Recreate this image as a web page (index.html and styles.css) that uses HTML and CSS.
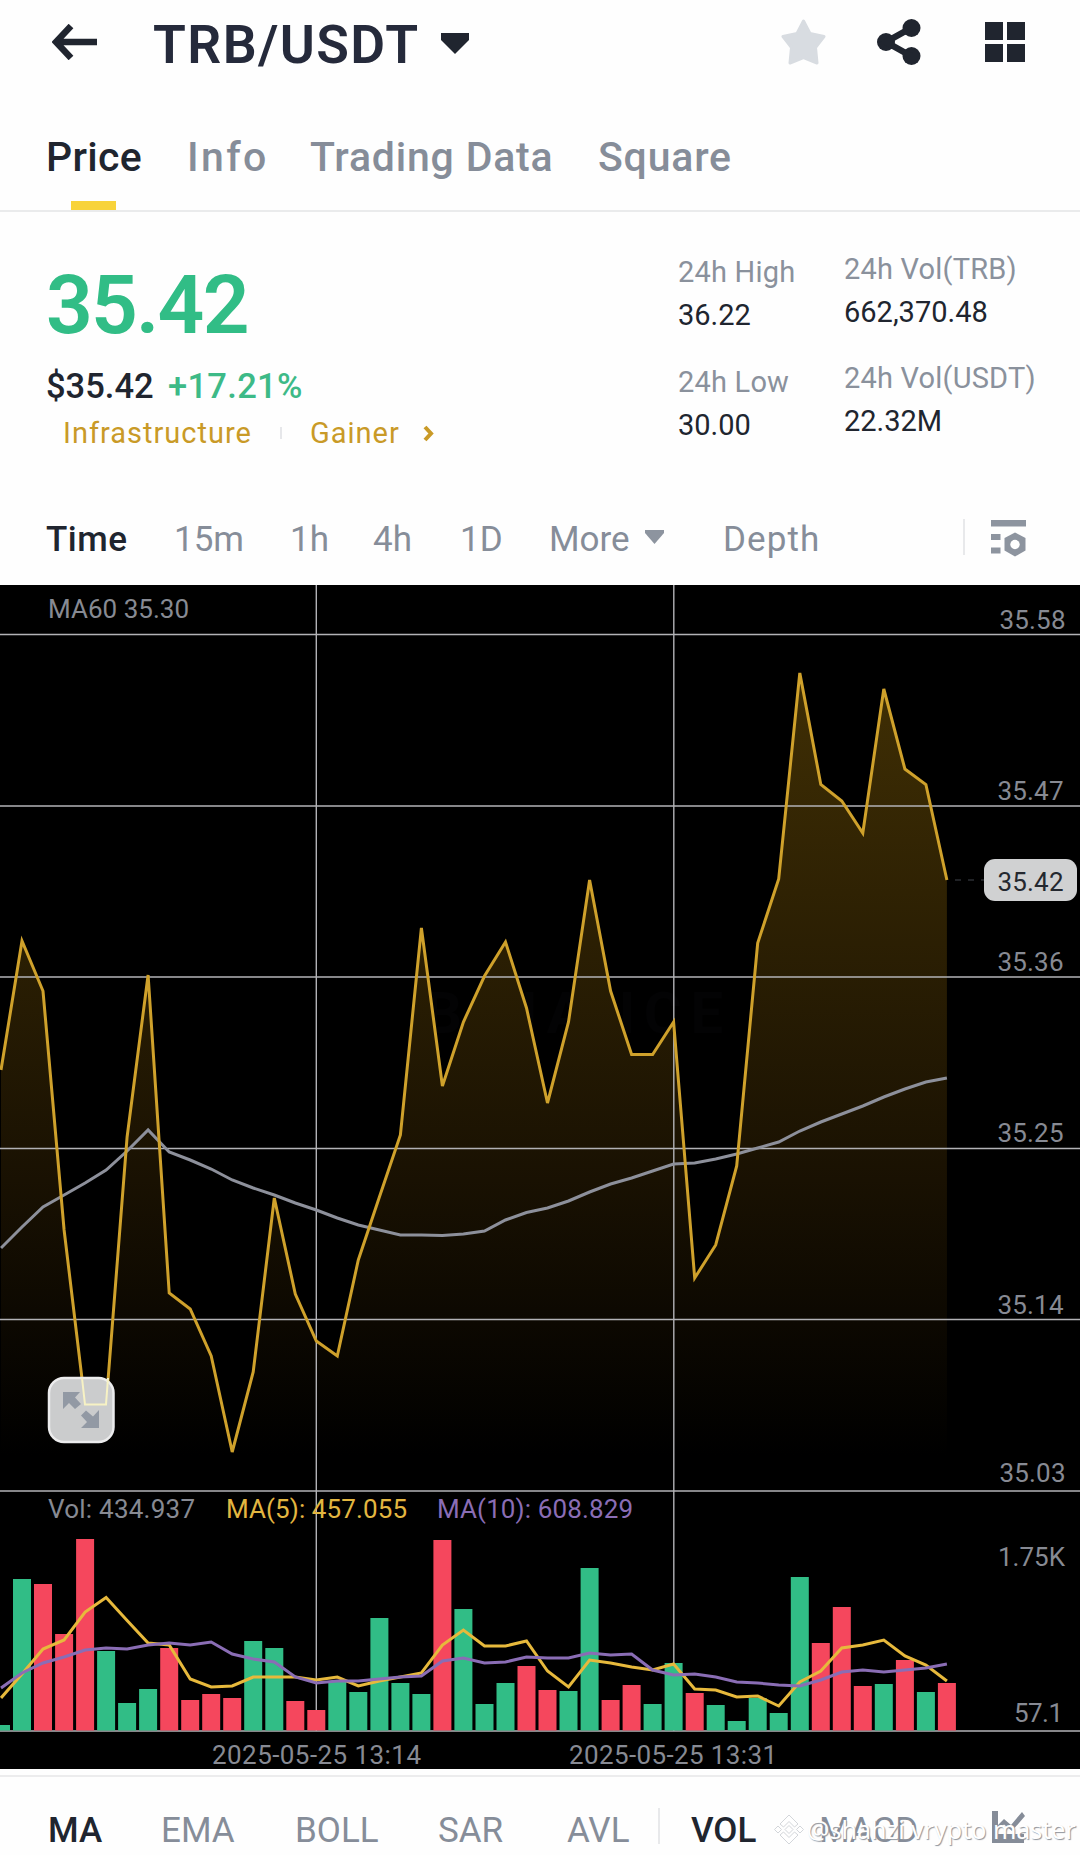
FILE: index.html
```
<!DOCTYPE html>
<html lang="en">
<head>
    <meta charset="UTF-8">
    <title>TRB/USDT</title>
    <link rel="stylesheet" href="styles.css">
</head>
<body>
    <div id="header">
        <svg class="back" width="46" height="36" viewBox="0 0 46 36"><path d="M19 2 L4 18 L19 34 M4 18 H45" fill="none" stroke="#20252f" stroke-width="6.5"/></svg>
        <div class="pair">
            <h1>TRB/USDT</h1>
            <svg width="28" height="21" viewBox="0 0 28 21"><path d="M0 0 H28 V7 L14 21 L0 7 Z" fill="#20252f"/></svg>
        </div>
        <div class="tools">
            <svg class="star" width="45" height="46" viewBox="0 0 45 46"><path d="M22.5 2 L29 14.5 L43 17.5 L34.5 28.5 L36 44 L22.5 38.5 L9 44 L10.5 28.5 L2 17.5 L16 14.5 Z" fill="#d8dce1" stroke="#d8dce1" stroke-width="3" stroke-linejoin="round"/></svg>
            <svg class="share" width="44" height="46" viewBox="0 0 44 46"><g fill="#20252f"><circle cx="9" cy="23" r="9"/><circle cx="34.500" cy="9" r="9"/><circle cx="34.500" cy="37" r="9"/></g><path d="M34 9 L9 23 L34 37" fill="none" stroke="#20252f" stroke-width="6.500"/></svg>
            <svg class="apps" width="40" height="40" viewBox="0 0 40 40"><path d="M0 0h18v18H0z M22 0h18v18H22z M0 22h18v18H0z M22 22h18v18H22z" fill="#20252f"/></svg>
        </div>
    </div>

    <ul id="tab">
        <li class="selected">Price</li>
        <li class="info">Info</li>
        <li>Trading Data</li>
        <li>Square</li>
    </ul>

    <div id="ticker">
        <div class="last">
            <div class="price">35.42</div>
            <div class="change"><span class="usd">$35.42</span><span class="up">+17.21%</span></div>
            <div class="tags">
                <span class="infra">Infrastructure</span><i></i><span class="gainer">Gainer</span>
                <svg width="11" height="17" viewBox="0 0 11 17"><path d="M2 2 L8 8.500 L2 15" fill="none" stroke="#c99a27" stroke-width="4"/></svg>
            </div>
        </div>
        <dl class="range">
            <dt>24h High</dt>
            <dd>36.22</dd>
            <dt>24h Low</dt>
            <dd>30.00</dd>
        </dl>
        <dl class="volume">
            <dt>24h Vol(TRB)</dt>
            <dd>662,370.48</dd>
            <dt>24h Vol(USDT)</dt>
            <dd>22.32M</dd>
        </dl>
    </div>

    <ul id="period">
        <li class="selected">Time</li>
        <li>15m</li>
        <li>1h</li>
        <li>4h</li>
        <li>1D</li>
        <li>More<svg width="19" height="14" viewBox="0 0 19 14"><path d="M0 0 H19 V3 L9.500 14 L0 3 Z" fill="#8d949f"/></svg></li>
        <li class="depth">Depth</li>
        <li class="setting">
            <svg width="36" height="37" viewBox="0 0 36 37"><path d="M0 0h35v6.500H0z M0 14h9.500v6H0z M0 27.500h9.500v6H0z" fill="#8d949f"/><path d="M24 12.500 L34.500 18 V30.500 L24 36.500 L13.500 30.500 V18 Z" fill="#8d949f"/><circle cx="24" cy="24.500" r="4.700" fill="#fff"/></svg>
        </li>
    </ul>

    <svg id="chart" width="1080" height="1184" viewBox="0 585 1080 1184">
        <defs>
            <linearGradient id="fade" gradientUnits="userSpaceOnUse" x1="0" y1="670" x2="0" y2="1455">
                <stop offset="0" stop-color="#402f04"/>
                <stop offset=".65" stop-color="#191102"/>
                <stop offset="1" stop-color="#000"/>
            </linearGradient>
        </defs>
        <text class="brand" x="425" y="1033" textLength="298">BINANCE</text>
        <path id="area" fill="url(#fade)"/>
        <path class="grid" d="M0 634.500H1080 M0 806H1080 M0 977H1080 M0 1148.500H1080 M0 1319.500H1080 M0 1491H1080 M0 1731H1080"/>
        <path class="grid col" d="M316.300 585V1731 M673.800 585V1731"/>
        <path d="M955 880H984" stroke="#2b2e33" stroke-width="1.500" stroke-dasharray="6 7"/>
        <g id="bars"></g>
        <polyline id="ma60" class="line" stroke="#8d909b"/>
        <polyline id="time" class="line" stroke="#cfa12b"/>
        <polyline id="ma5" class="line" stroke="#e7b93c"/>
        <polyline id="ma10" class="line" stroke="#8a6db5"/>

        <text x="48" y="618" textLength="141">MA60 35.30</text>
        <text x="999.500" y="629" textLength="66">35.58</text>
        <text x="997.500" y="800" textLength="66">35.47</text>
        <text x="997.500" y="971" textLength="66">35.36</text>
        <text x="997.500" y="1142" textLength="66">35.25</text>
        <text x="997.500" y="1314" textLength="66">35.14</text>
        <text x="999.500" y="1482" textLength="66">35.03</text>
        <text x="998" y="1566" textLength="67">1.75K</text>
        <text x="1014" y="1722" textLength="49">57.1</text>
        <text x="48" y="1518" textLength="147">Vol: 434.937</text>
        <text x="226" y="1518" textLength="181" class="yellow">MA(5): 457.055</text>
        <text x="437" y="1518" textLength="196" class="purple">MA(10): 608.829</text>
        <text x="212" y="1764" textLength="209">2025-05-25 13:14</text>
        <text x="569" y="1764" textLength="208">2025-05-25 13:31</text>

        <rect x="984" y="859" width="93" height="42" rx="11" fill="#d0d1d2"/>
        <text x="997.500" y="891" textLength="66" class="now">35.42</text>

        <rect x="49" y="1378" width="64.500" height="64" rx="15" fill="#cbcccd" stroke="#ececed" stroke-width="2.500"/>
        <path d="M82 1378 L85 1404.500 H106 L108 1378" fill="none" stroke="#f7f2c4" stroke-width="2"/>
        <path d="M63 1392 H80 L75 1397.500 L81 1404 L75 1409 L69 1403 L63 1409 Z" fill="#9299a4"/>
        <path d="M99 1428 H81 L87 1422 L81 1415.500 L86 1410.500 L93 1416.500 L99 1410 Z" fill="#9299a4"/>
    </svg>

    <ul id="indicator">
        <li class="selected">MA</li>
        <li>EMA</li>
        <li>BOLL</li>
        <li>SAR</li>
        <li>AVL</li>
        <li class="selected vol">VOL</li>
        <li>MACD</li>
        <li><svg width="33" height="33" viewBox="0 0 33 33"><path d="M0 0 H6 V14 L12 8 L19 14 L30 1 L33 5 L20 20 L12 13.500 L6 19 V23 H32 V32 H0 Z" fill="#858c98"/></svg></li>
    </ul>
    <div id="watermark">
        <svg width="30" height="31" viewBox="0 0 30 31"><g fill="#fff" stroke="#d3d6da" stroke-width="1"><path d="M15 1 L24 10 L20.500 13 L15 7.500 L9.500 13 L6 10 Z"/><path d="M15 30 L24 21 L20.500 18 L15 23.500 L9.500 18 L6 21 Z"/><path d="M15 11.500 L19 15.500 L15 19.500 L11 15.500 Z"/><path d="M4 12 L7.500 15.500 L4 19 L.5 15.500 Z M26 12 L29.500 15.500 L26 19 L22.500 15.500 Z"/></g></svg>
        <span>@shahzi vrypto master</span>
    </div>
<script>
    var step = 21.02;
    var aTime = [1070,941,991,1230,1404.500,1404.500,1137,975,1293,1309,1356,1452,1372,1198,1294,1341,1356,1260,1197,1135,928,1086,1022,976,942,1008,1103,1022,880,991,1054.500,1054.500,1022,1278,1245,1166,943,879,673,784.500,801,833,689,769,784.500,880];
    var aMa60 = [1248,1227,1207,1195,1183,1170,1151,1130,1152,1160,1169,1180,1188,1195,1203,1210,1218,1225,1230,1235,1235,1235.500,1234,1231,1220,1212.500,1208,1201,1192,1184,1178,1171,1164,1163,1159,1154,1148,1142,1131,1122,1114,1106,1097,1089,1082,1078];
    var aVol = [1725,1579,1584,1634,1539,1651,1703,1689,1648,1700,1694,1698,1641,1648,1701,1710,1682,1692,1618,1683,1694,1540,1609,1704,1683,1666,1690,1691,1568,1700,1685,1704,1663,1693,1705,1721,1698,1713,1577,1643,1607,1686,1684,1660,1692,1683];
    var color = "ggrrrgggrrrrggrrgggggrgggrrggrrggrgggggrrrgrgr";
    var aMa5 = [1698,1674,1649,1640,1612,1597.500,1620.500,1643,1645,1679,1687,1686,1677,1677,1677,1680,1677,1686,1681,1677,1673,1645,1630,1646,1646,1641,1671,1687,1660,1663,1667,1670,1664,1689,1690,1697,1696,1706,1682,1671,1648,1645,1640,1656,1665,1681];
    var aMa10 = [1688,1673,1663,1657,1650,1648,1649,1645,1643,1645,1642,1654,1659,1662,1677,1683,1681,1681,1679,1677,1676,1661,1658,1663,1662,1657,1658,1658,1653,1655,1654,1670,1675,1674,1677,1682,1683,1685,1686,1680,1672,1670,1672,1670,1668,1664];

    function toPoints(arr) {
        var s = "";
        for (var i = 0; i < arr.length; i++) {
            s += (1 + i * step).toFixed(1) + "," + arr[i] + " ";
        }
        return s;
    }
    document.getElementById("time").setAttribute("points", toPoints(aTime));
    document.getElementById("ma60").setAttribute("points", toPoints(aMa60));
    document.getElementById("ma5").setAttribute("points", toPoints(aMa5));
    document.getElementById("ma10").setAttribute("points", toPoints(aMa10));
    document.getElementById("area").setAttribute("d", "M1,1491 L" + toPoints(aTime) + "L947,1491 Z");

    var oBars = document.getElementById("bars");
    for (var i = 0; i < aVol.length; i++) {
        var rect = document.createElementNS("http://www.w3.org/2000/svg", "rect");
        rect.setAttribute("x", (1 + i * step - 9).toFixed(1));
        rect.setAttribute("y", aVol[i]);
        rect.setAttribute("width", 18);
        rect.setAttribute("height", 1730.5 - aVol[i]);
        rect.setAttribute("class", color.charAt(i) == "g" ? "buy" : "sell");
        oBars.appendChild(rect);
    }
</script>
</body>
</html>
```
FILE: styles.css
```
*{
    padding: 0;
    margin: 0;
    box-sizing: border-box;
}
body{
    width: 1080px;
    height: 1855px;
    overflow: hidden;
    position: relative;
    background: #fefefe;
    color: #20252f;
    font-family: Roboto, "Liberation Sans", sans-serif;
}
ul{
    list-style: none;
}
svg{
    display: block;
    flex: none;
}
#header{
    height: 88px;
    display: flex;
    align-items: center;
    padding: 0 55px 0 52px;
}
#header .back{
    margin-right: 55px;
    margin-bottom: 4px;
}
.pair{
    display: flex;
    align-items: center;
}
.pair h1{
    width: 288px;
    padding-top: 2px;
    font-size: 53.5px;
    font-weight: 600;
    line-height: 60px;
    letter-spacing: 1.4px;
    color: #252a3b;
}
.pair svg{
    margin-bottom: 2px;
}
.tools{
    display: flex;
    align-items: center;
    margin-left: auto;
    margin-bottom: 4px;
}
.tools .star{
    margin-right: 51px;
}
.tools .share{
    margin-right: 64px;
}
#tab{
    height: 124px;
    padding: 44px 0 0 46px;
    display: grid;
    grid-template-columns: 141px 123px 288px 200px;
    border-bottom: 2px solid #eaebec;
    font-size: 41px;
    font-weight: 500;
    line-height: 50px;
    letter-spacing: .8px;
    color: #868d99;
}
#tab li{
    height: 78px;
}
#tab .info{
    letter-spacing: 2.4px;
}
#tab .selected{
    letter-spacing: .3px;
    color: #20252f;
}
#tab .selected:after{
    content: "";
    display: block;
    width: 45px;
    height: 9px;
    margin: 19px 0 0 25px;
    background: #f8d33a;
}
#ticker{
    height: 278px;
    padding-left: 46px;
    display: grid;
    grid-template-columns: 632px 166px 236px;
}
.last{
    padding-top: 52px;
}
.last .price{
    font-size: 82px;
    font-weight: 600;
    line-height: 82px;
    letter-spacing: -1.8px;
    color: #31bd86;
}
.change{
    margin-top: 18px;
    display: flex;
    font-size: 34.5px;
    font-weight: 500;
    line-height: 44px;
}
.change .usd{
    width: 122px;
}
.change .up{
    letter-spacing: .3px;
    color: #3dba87;
}
.tags{
    margin-top: 5px;
    display: flex;
    align-items: center;
    font-size: 29px;
    line-height: 40px;
    letter-spacing: 1px;
    color: #c99a27;
}
.tags .infra{
    width: 217px;
    padding-left: 17px;
}
.tags i{
    width: 2px;
    height: 12px;
    margin-left: 17px;
    background: #e6e7ea;
}
.tags .gainer{
    width: 141px;
    padding-left: 28px;
}
.range, .volume{
    padding-top: 39px;
    font-size: 29px;
    line-height: 43px;
}
.volume{
    padding-top: 36px;
    line-height: 42.5px;
}
dt{
    letter-spacing: .2px;
    color: #8a919c;
}
dd{
    margin-bottom: 24px;
}
#period{
    height: 95px;
    padding: 25px 0 0 46px;
    display: grid;
    grid-template-columns: 128px 116px 83px 87px 89px 174px 240px 1fr;
    font-size: 35px;
    line-height: 50px;
    color: #868d99;
}
#period .selected, #indicator .selected{
    color: #20252f;
    font-weight: 500;
}
#period .selected{
    letter-spacing: .5px;
}
#period li{
    display: flex;
}
#period li svg{
    margin: 15px 0 0 15px;
}
#period .depth{
    letter-spacing: 1.1px;
}
#period .setting{
    height: 36px;
    margin-top: 4px;
    border-left: 2px solid #e8e9eb;
}
#period .setting svg{
    margin: 1px 0 0 26px;
}
#chart{
    background: #000;
}
#chart text{
    font-size: 26px;
    fill: #878a93;
}
#chart .yellow{
    fill: #e3b640;
}
#chart .purple{
    fill: #8a6db5;
}
#chart .now{
    fill: #24282f;
}
#chart .brand{
    font-size: 58px;
    font-weight: 700;
    fill: #030304;
}
.grid{
    fill: none;
    stroke: #b2b2b6;
    stroke-width: 1.7;
}
.col{
    stroke-width: 1.4;
}
.line{
    fill: none;
    stroke-width: 3;
}
.buy{
    fill: #31bd86;
}
.sell{
    fill: #f5475d;
}
#indicator{
    height: 80px;
    margin-top: 6px;
    padding: 29px 0 0 48px;
    display: grid;
    grid-template-columns: 113px 134px 143px 129px 91px 161px 173px 1fr;
    border-top: 2px solid #ececed;
    font-size: 35px;
    line-height: 50px;
    color: #868d99;
}
#indicator .vol{
    height: 36px;
    margin-top: 2px;
    padding-left: 31px;
    border-left: 2px solid #e8e9eb;
    line-height: 46px;
}
#indicator svg{
    margin-top: 5px;
}
#watermark{
    position: absolute;
    left: 774px;
    top: 1810px;
    display: flex;
    align-items: center;
    font: 25px/38px "Noto Sans", sans-serif;
    color: #fff;
    text-shadow: 1px 1px 1px #8f949c;
    white-space: nowrap;
}
#watermark span{
    margin-left: 3px;
}
```
